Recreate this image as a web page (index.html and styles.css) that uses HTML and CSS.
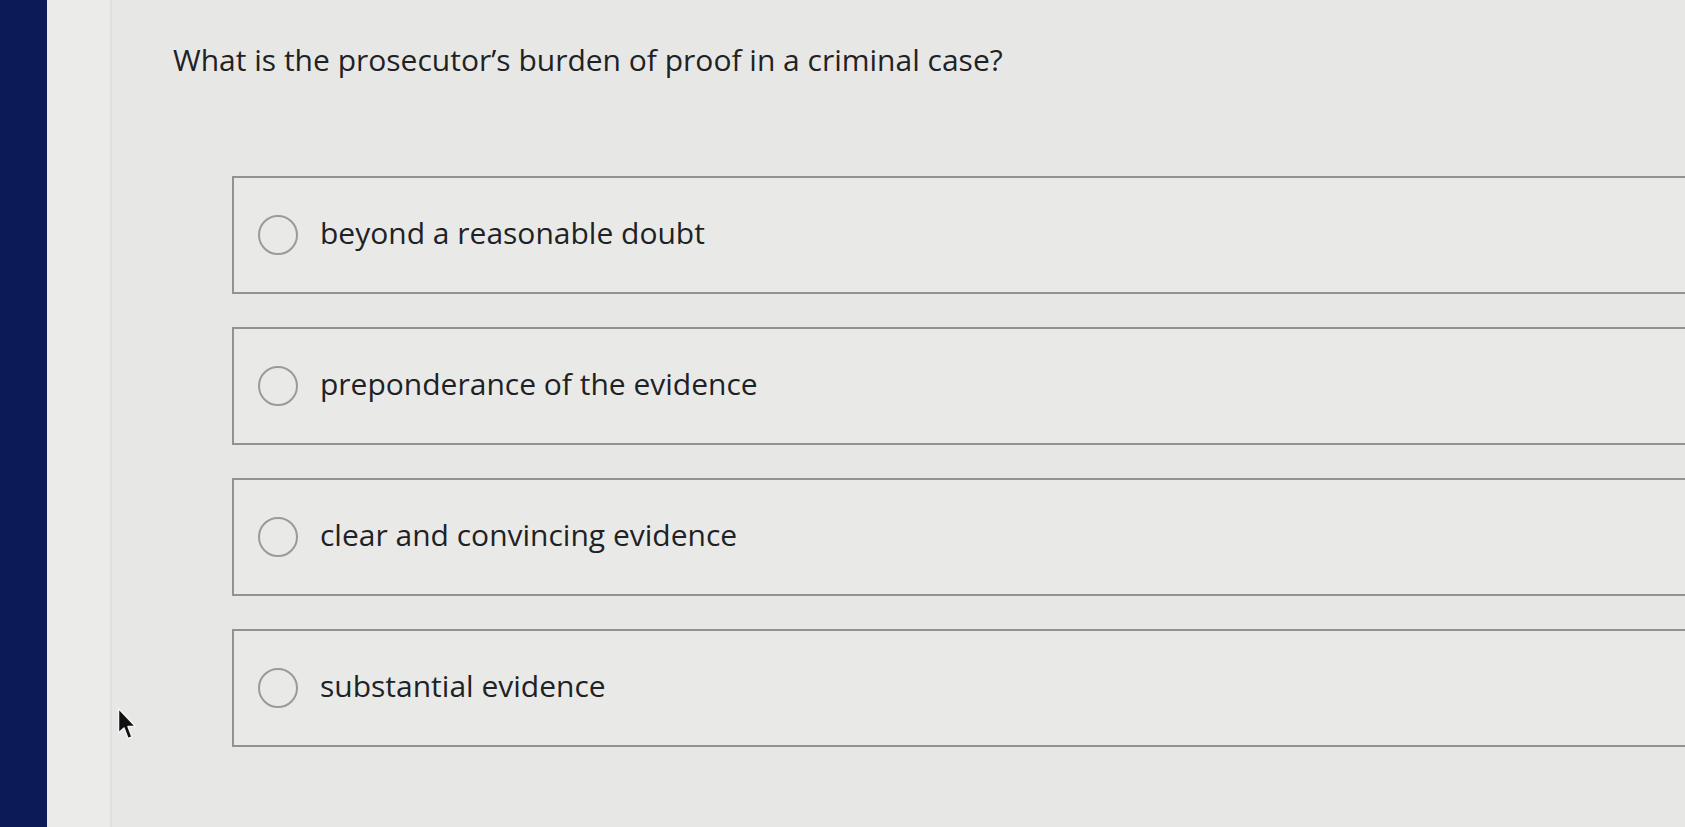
FILE: index.html
```html
<!DOCTYPE html>
<html lang="en">
<head>
<meta charset="utf-8">
<title>Quiz question</title>
<link rel="stylesheet" href="styles.css">
</head>
<body>
<div class="screen">
  <nav class="nav-strip"></nav>
  <div class="gutter"></div>
  <main class="main">
    <h1 class="question">What is the prosecutor’s burden of proof in a criminal case?</h1>
    <ul class="answers">
      <li class="answer"><span class="radio"></span><span class="label">beyond a reasonable doubt</span></li>
      <li class="answer"><span class="radio"></span><span class="label">preponderance of the evidence</span></li>
      <li class="answer"><span class="radio"></span><span class="label">clear and convincing evidence</span></li>
      <li class="answer"><span class="radio"></span><span class="label">substantial evidence</span></li>
    </ul>
  </main>
  <svg class="cursor" width="20" height="34" viewBox="0 0 20 34"><path d="M1.5 1.5 L1.5 26 L7 21 L11 31.5 L15 30 L11 19.5 L18.5 19.5 Z" fill="#111" stroke="#f4f4f4" stroke-width="1.5" stroke-linejoin="round"/></svg>
</div>
</body>
</html>
```
FILE: styles.css
```css
html, body {
  margin: 0;
  padding: 0;
  height: 100%;
  overflow: hidden;
  background: #e7e8e6;
}
.screen {
  position: relative;
  display: flex;
  height: 827px;
  width: 1685px;
  font-family: "Open Sans", "Liberation Sans", sans-serif;
  color: #1f2224;
}
.nav-strip {
  width: 47px;
  flex: none;
  background: #0c1a58;
}
.gutter {
  width: 63px;
  flex: none;
  background: #ebebea;
  border-right: 2px solid #dfdfdd;
}
.main {
  flex: 1;
  padding-left: 61px;
  min-width: 0;
}
.question {
  margin: 0;
  padding-top: 40px;
  font-size: 30px;
  font-weight: 400;
  line-height: 40px;
}
.answers {
  list-style: none;
  margin: 96px -40px 0 59px;
  padding: 0;
  display: flex;
  flex-direction: column;
  gap: 33px;
}
.answer {
  display: flex;
  align-items: center;
  height: 118px;
  box-sizing: border-box;
  border: 2px solid #929391;
  padding-left: 24px;
  background: #e9eae8;
}
.radio {
  flex: none;
  width: 36px;
  height: 36px;
  border: 2px solid #9a9b99;
  border-radius: 50%;
  margin-right: 22px;
}
.label {
  font-size: 30px;
  line-height: 40px;
  margin-top: -4px;
}
.cursor {
  position: absolute;
  left: 117px;
  top: 707px;
}
```
